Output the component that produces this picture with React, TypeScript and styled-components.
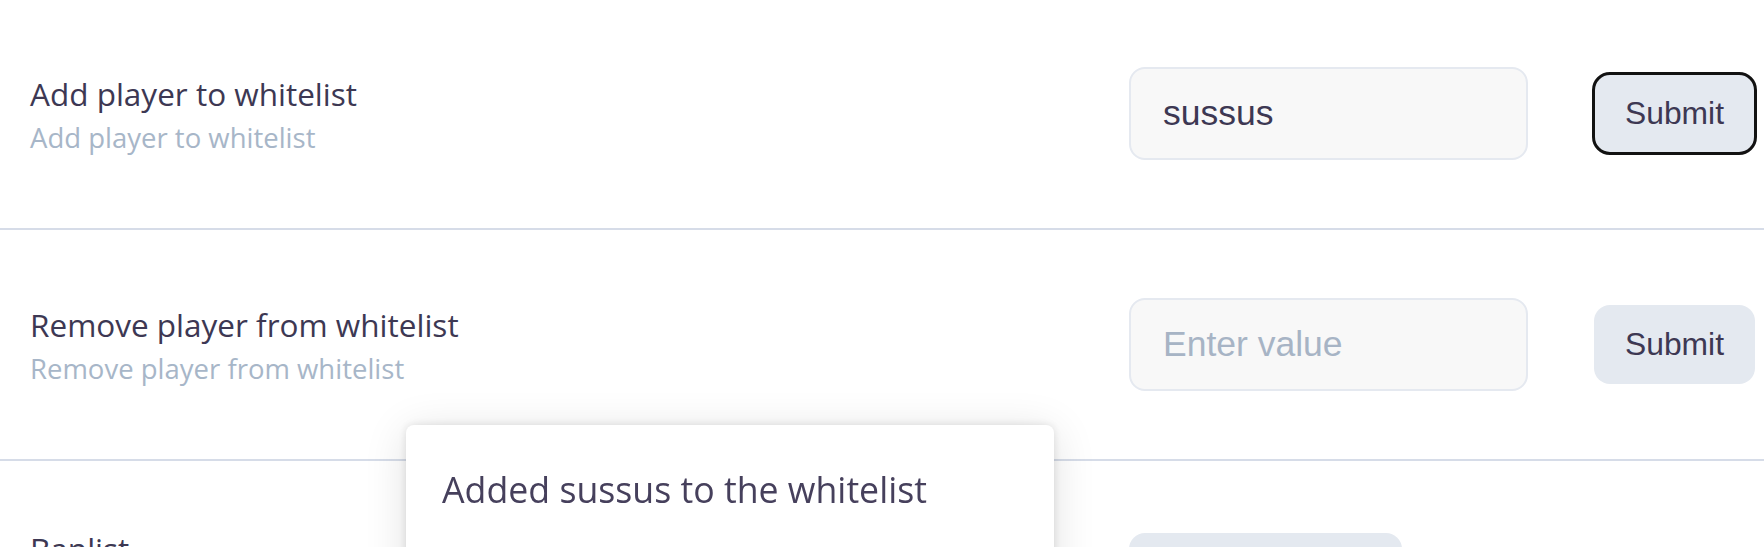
import { useState } from "react";
import styled, { createGlobalStyle } from "styled-components";

const GlobalStyle = createGlobalStyle`
  html, body {
    margin: 0;
    padding: 0;
    background: #ffffff;
    overflow: hidden;
  }
  * {
    box-sizing: border-box;
  }
`;

// whole settings list, scrolled a pixel down
const Page = styled.div`
  margin-top: -1px;
  font-family: "Open Sans", "Noto Sans", sans-serif;
`;

const Row = styled.div<{ $align?: "center" | "start"; $padTop?: number }>`
  display: grid;
  grid-template-columns: 1fr 626px;
  align-items: ${(p) => (p.$align === "start" ? "start" : "center")};
  min-height: 231px;
  padding: ${(p) => p.$padTop ?? 0}px 9px 0 30px;
  border-bottom: 2px solid #d6dce8;
`;

const Label = styled.div`
  display: flex;
  flex-direction: column;
`;

const Title = styled.div`
  font-size: 31.5px;
  color: #3d3853;
`;

const Subtitle = styled.div`
  margin-top: 4px;
  font-size: 27.5px;
  color: #a7b6c8;
`;

const Controls = styled.div<{ $offset?: number }>`
  display: flex;
  align-items: center;
  gap: 66px;
  margin-top: ${(p) => p.$offset ?? 0}px;
`;

const TextInput = styled.input`
  width: 399px;
  height: 93px;
  padding: 0 32px;
  border: 2px solid #e5e9f0;
  border-radius: 16px;
  background: #f8f8f8;
  font-family: "Liberation Sans", Arial, sans-serif;
  font-size: 35.5px;
  color: #3d3853;
  outline: none;
  &::placeholder {
    color: #a7b4c5;
  }
`;

const SubmitBtn = styled.button<{ $focused?: boolean }>`
  height: 79px;
  padding: 0 31px;
  border: none;
  border-radius: 16px;
  background: #e4e9f0;
  font-family: "Liberation Sans", Arial, sans-serif;
  font-size: 31.8px;
  color: #3d3853;
  cursor: pointer;
  outline: ${(p) => (p.$focused ? "3px solid #121212" : "none")};
  outline-offset: -1px;
`;

const WideBtn = styled(SubmitBtn)`
  width: 273px;
  height: 85px;
`;

// toast popup over the list
const Toast = styled.div`
  position: fixed;
  left: 406px;
  top: 425px;
  width: 648px;
  height: 200px;
  padding: 40px 36px;
  background: #ffffff;
  border-radius: 8px;
  box-shadow: 0 0 10px rgba(0, 0, 0, 0.12), 0 6px 44px rgba(0, 0, 0, 0.12);
`;

const ToastText = styled.div`
  font-family: "Open Sans", "Noto Sans", sans-serif;
  font-size: 35.7px;
  color: #46405c;
`;

export default function App() {
  const [addValue, setAddValue] = useState("sussus");
  const [removeValue, setRemoveValue] = useState("");

  return (
    <>
      <GlobalStyle />
      <Page>
        <Row>
          <Label>
            <Title>Add player to whitelist</Title>
            <Subtitle>Add player to whitelist</Subtitle>
          </Label>
          <Controls>
            <TextInput
              value={addValue}
              onChange={(e) => setAddValue(e.target.value)}
              placeholder="Enter value"
            />
            <SubmitBtn $focused>Submit</SubmitBtn>
          </Controls>
        </Row>
        <Row>
          <Label>
            <Title>Remove player from whitelist</Title>
            <Subtitle>Remove player from whitelist</Subtitle>
          </Label>
          <Controls>
            <TextInput
              value={removeValue}
              onChange={(e) => setRemoveValue(e.target.value)}
              placeholder="Enter value"
            />
            <SubmitBtn>Submit</SubmitBtn>
          </Controls>
        </Row>
        <Row $align="start" $padTop={66}>
          <Label>
            <Title>Banlist</Title>
            <Subtitle>List of banned players</Subtitle>
          </Label>
          <Controls $offset={6}>
            <WideBtn>Show banlist</WideBtn>
          </Controls>
        </Row>
      </Page>
      <Toast>
        <ToastText>Added sussus to the whitelist</ToastText>
      </Toast>
    </>
  );
}
